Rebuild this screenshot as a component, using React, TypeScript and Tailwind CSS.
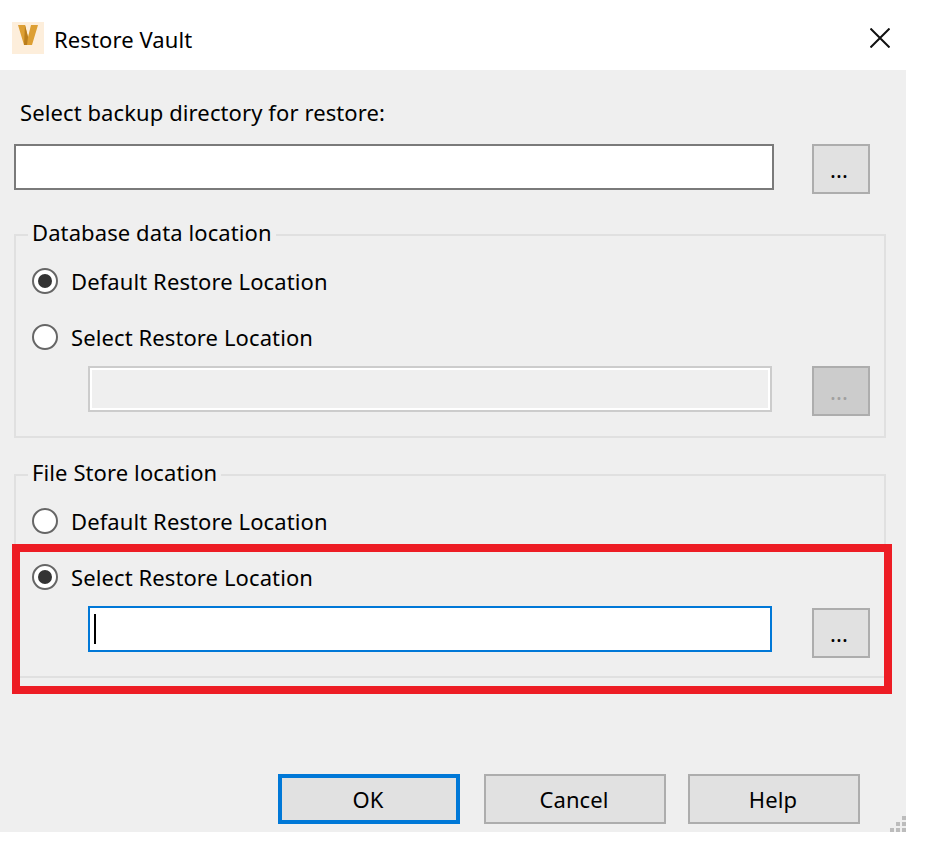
import React from 'react';

const font = "font-['Noto_Sans','Open_Sans',sans-serif] text-[22px] leading-[28px] tracking-[0.1px] text-black";

function Radio({ checked, label }: { checked?: boolean; label: string }) {
  return (
    <div className="flex items-center h-[26px]">
      <div className="w-[26px] h-[26px] rounded-full bg-white border-2 border-[#666666] flex items-center justify-center shrink-0">
        {checked && <div className="w-[14px] h-[14px] rounded-full bg-[#333333]" />}
      </div>
      <span className="ml-[13px]">{label}</span>
    </div>
  );
}

function BrowseButton({ disabled, className = 'ml-[40px]' }: { disabled?: boolean; className?: string }) {
  return (
    <button className={`w-[58px] h-[50px] border-2 border-[#adadad] flex items-end justify-center pb-[12px] pr-[4px] leading-[22px] ${disabled ? 'bg-[#cccccc] text-[#a0a0a0]' : 'bg-[#e1e1e1] text-black'} ${className}`}>
      ...
    </button>
  );
}

function Group({ title, children }: { title: string; children: React.ReactNode }) {
  return (
    <fieldset className="m-0 w-[872px] h-[220px] border-2 border-[#e0e0e0] pt-0 pr-0 pb-0 pl-[16px]">
      <legend className="h-[34px] leading-[28px] -ml-[4px] px-[4px] py-0">{title}</legend>
      {children}
    </fieldset>
  );
}

function DialogButton({ label, focused, className = '' }: { label: string; focused?: boolean; className?: string }) {
  return (
    <button className={`h-[50px] pr-[2px] bg-[#e1e1e1] ${focused ? 'border-4 border-[#0078d7]' : 'border-2 border-[#adadad]'} ${className}`}>
      {label}
    </button>
  );
}

export default function App() {
  return (
    <div className={`w-[926px] h-[853px] bg-white ${font}`}>
      {/* title bar */}
      <div className="relative w-[906px] h-[70px] bg-white flex items-center justify-between pt-[6px]">
        <div className="flex items-center pl-[12px]">
          <svg width="32" height="32" viewBox="0 0 32 32">
            <rect width="32" height="32" fill="#fdeedb" />
            <path d="M6 3h7l3 12 3-12h7l-6 20h-8z" fill="#dd9f33" />
            <path d="M13 3l3 12-1 8h-3z" fill="#b97d1c" />
          </svg>
          <span className="ml-[10px] mt-[2px]">Restore Vault</span>
        </div>
        <svg width="20" height="20" viewBox="0 0 20 20" className="mr-[16px] -ml-[20px]">
          <path d="M0.5 0.5L19.5 19.5M19.5 0.5L0.5 19.5" stroke="#111111" strokeWidth="2" fill="none" />
        </svg>
      </div>

      {/* dialog body */}
      <div className="relative w-[906px] h-[762px] bg-[#efefef] pl-[14px]">
        <div className="pt-[28px] pl-[6px]">Select backup directory for restore:</div>
        <div className="flex items-start mt-[18px]">
          <div className="w-[760px] h-[46px] bg-white border-2 border-[#7a7a7a]" />
          <BrowseButton className="ml-[38px]" />
        </div>

        <div className="mt-[24px]">
          <Group title="Database data location">
            <div className="mt-[16px]"><Radio checked label="Default Restore Location" /></div>
            <div className="mt-[30px]"><Radio label="Select Restore Location" /></div>
            <div className="flex items-start mt-[16px] ml-[56px]">
              <div className="w-[684px] h-[46px] bg-[#efefef] border-2 border-[#cccccc] outline-2 -outline-offset-4 outline-white" />
              <BrowseButton disabled />
            </div>
          </Group>
        </div>

        <div className="mt-[20px]">
          <Group title="File Store location">
            <div className="mt-[16px]"><Radio label="Default Restore Location" /></div>
            <div className="mt-[30px]"><Radio checked label="Select Restore Location" /></div>
            <div className="flex items-start mt-[16px] ml-[56px]">
              <div className="w-[684px] h-[46px] bg-white border-2 border-[#0078d7] flex items-center pl-[4px]">
                <div className="w-[2px] h-[30px] bg-black" />
              </div>
              <BrowseButton className="ml-[40px] mt-[2px]" />
            </div>
          </Group>
        </div>

        <div className="flex justify-end pr-[46px] mt-[96px]">
          <DialogButton focused label="OK" className="w-[182px]" />
          <DialogButton label="Cancel" className="w-[182px] ml-[24px]" />
          <DialogButton label="Help" className="w-[172px] ml-[22px]" />
        </div>

        {/* red highlight drawn over the screenshot */}
        <div className="absolute left-[12px] top-[474px] w-[880px] h-[150px] border-[8px] border-[#ed1c24]" />

        {/* resize grip */}
        <svg width="16" height="16" viewBox="0 0 16 16" className="absolute right-0 bottom-0" fill="#bcbcbc">
          <rect x="12" y="0" width="4" height="4" />
          <rect x="6" y="6" width="4" height="4" />
          <rect x="12" y="6" width="4" height="4" />
          <rect x="0" y="12" width="4" height="4" />
          <rect x="6" y="12" width="4" height="4" />
          <rect x="12" y="12" width="4" height="4" />
        </svg>
      </div>
    </div>
  );
}
